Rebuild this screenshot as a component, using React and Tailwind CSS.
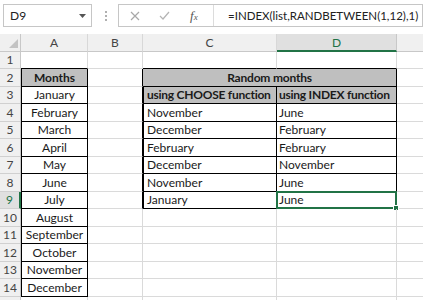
import React from 'react';

const rows = [
  { n: 1, a: '', c: '', d: '' },
  { n: 2, a: 'Months', c: 'Random months', d: '' },
  { n: 3, a: 'January', c: 'using CHOOSE function', d: 'using INDEX function' },
  { n: 4, a: 'February', c: 'November', d: 'June' },
  { n: 5, a: 'March', c: 'December', d: 'February' },
  { n: 6, a: 'April', c: 'February', d: 'February' },
  { n: 7, a: 'May', c: 'December', d: 'November' },
  { n: 8, a: 'June', c: 'November', d: 'June' },
  { n: 9, a: 'July', c: 'January', d: 'June' },
  { n: 10, a: 'August', c: '', d: '' },
  { n: 11, a: 'September', c: '', d: '' },
  { n: 12, a: 'October', c: '', d: '' },
  { n: 13, a: 'November', c: '', d: '' },
  { n: 14, a: 'December', c: '', d: '' },
  { n: 15, a: '', c: '', d: '' },
];

// cells that carry a black border in the sheet
const inTable = (r, c) => {
  if (c === 1) return r >= 2 && r <= 14;
  if (c === 3 || c === 4) return r >= 2 && r <= 9;
  return false;
};

const Cell = ({ r, c, children, className = '', span }) => {
  const right = inTable(r, c) || inTable(r, c + 1) || (r === 2 && c === 3);
  const bottom = inTable(r, c) || inTable(r + 1, c);
  return (
    <div
      className={`relative flex items-center overflow-visible whitespace-nowrap border-b border-r ${
        right ? 'border-r-black' : 'border-r-[#dadada]'
      } ${bottom ? 'border-b-black' : 'border-b-[#dadada]'} ${span ? 'col-span-2' : ''} ${className}`}
    >
      {children}
    </div>
  );
};

const FormulaBar = () => (
  <div className="flex h-[34px] items-start bg-white pl-[3px] pt-[4px] font-['Lato',sans-serif] text-[12px] text-[#222]">
    <div className="flex h-[23px] w-[89px] shrink-0 items-center justify-between border border-[#c6c6c6] pl-[6px] pr-[5px]">
      <span>D9</span>
      <svg width="7" height="4" viewBox="0 0 7 4">
        <path d="M0 0h7L3.5 4z" fill="#555" />
      </svg>
    </div>
    <div className="ml-[13px] mt-[7px] flex shrink-0 flex-col gap-[2px]">
      <span className="block h-[2px] w-[2px] bg-[#b0b0b0]" />
      <span className="block h-[2px] w-[2px] bg-[#b0b0b0]" />
      <span className="block h-[2px] w-[2px] bg-[#b0b0b0]" />
    </div>
    <div className="ml-[11px] flex h-[23px] min-w-0 flex-1 border border-[#c6c6c6]">
      <div className="flex w-[95px] shrink-0 items-center border-r border-[#dcdcdc]">
        <svg width="10" height="10" viewBox="0 0 10 10" className="ml-[11px]">
          <path d="M1 1l8 8M9 1l-8 8" stroke="#a8a8a8" strokeWidth="1.2" />
        </svg>
        <svg width="11" height="9" viewBox="0 0 11 9" className="ml-[19px]">
          <path d="M1 5l3 3 6-7" stroke="#b4b4b4" strokeWidth="1.2" fill="none" />
        </svg>
        <span className="ml-[20px] font-['Liberation_Serif',serif] text-[13px] italic text-[#555]">
          f<span className="text-[9px]">x</span>
        </span>
      </div>
      <div className="flex items-center whitespace-nowrap pl-[14px] text-[11.5px]">=INDEX(list,RANDBETWEEN(1,12),1)</div>
    </div>
  </div>
);

export default function App() {
  const heights = [17, 18, 17, 18, 17, 18, 17, 18, 17, 18, 17, 18, 17, 18, 17];
  return (
    <div className="h-[300px] w-[423px] overflow-hidden bg-white">
      <FormulaBar />
      <div
        className="grid font-['Lato',sans-serif] text-[12px] text-[#1a1a1a]"
        style={{
          gridTemplateColumns: '21px 67px 55px 134px 120px 1fr',
          gridTemplateRows: `18px ${heights.map((h) => h + 'px').join(' ')}`,
        }}
      >
        {/* column headers */}
        <div className="relative border-b border-r border-[#c8c8c8] bg-[#f0f0f0]">
          <svg width="9" height="9" viewBox="0 0 9 9" className="absolute bottom-[3px] right-[2px]">
            <path d="M9 0v9H0z" fill="#c3c3c3" />
          </svg>
        </div>
        {['A', 'B', 'C'].map((l) => (
          <div
            key={l}
            className="flex items-center justify-center border-b border-r border-b-[#c8c8c8] border-r-[#d8d8d8] bg-[#f0f0f0] text-[#444]"
          >
            {l}
          </div>
        ))}
        <div className="flex items-center justify-center border-b-2 border-r border-b-[#217346] border-r-[#c8c8c8] bg-[#e0e0e0] pt-[1px] text-[#217346]">
          D
        </div>
        <div className="border-b border-[#c8c8c8] bg-[#f0f0f0]" />

        {rows.map((row) => {
          const r = row.n;
          const sel = r === 9;
          const headFill = r === 2 || r === 3;
          return (
            <React.Fragment key={r}>
              <div
                className={`flex items-center justify-center border-b border-b-[#d0d0d0] text-[12px] ${
                  sel
                    ? 'border-r-2 border-r-[#217346] bg-[#e0e0e0] text-[#217346]'
                    : 'border-r border-r-[#c8c8c8] bg-[#f0f0f0] text-[#444]'
                }`}
              >
                {r < 15 ? r : ''}
              </div>
              <Cell
                r={r}
                c={1}
                className={`justify-center ${inTable(r, 1) ? 'border-l border-l-black' : ''} ${
                  r === 2 ? 'bg-[#bfbfbf] font-bold' : ''
                }`}
              >
                {row.a}
              </Cell>
              <Cell r={r} c={2} />
              {r === 2 ? (
                <Cell r={r} c={3} span className="justify-center bg-[#bfbfbf] font-bold tracking-[-0.2px]">
                  {row.c}
                </Cell>
              ) : (
                <>
                  <Cell
                    r={r}
                    c={3}
                    className={`pl-[3px] ${inTable(r, 3) ? 'border-l border-l-black' : ''} ${
                      headFill ? 'bg-[#bfbfbf] font-bold tracking-[-0.25px]' : ''
                    }`}
                  >
                    {row.c}
                  </Cell>
                  <Cell r={r} c={4} className={`pl-[2px] ${headFill ? 'bg-[#bfbfbf] font-bold tracking-[-0.25px]' : ''}`}>
                    {row.d}
                    {sel && (
                      <div className="pointer-events-none absolute -left-[1px] -top-[1px] bottom-[-1px] right-[-1px] border-2 border-[#217346]">
                        <div className="absolute -bottom-[4px] -right-[4px] h-[6px] w-[6px] border border-white bg-[#217346]" />
                      </div>
                    )}
                  </Cell>
                </>
              )}
              <div className="border-b border-b-[#dadada]" />
            </React.Fragment>
          );
        })}
      </div>
    </div>
  );
}
